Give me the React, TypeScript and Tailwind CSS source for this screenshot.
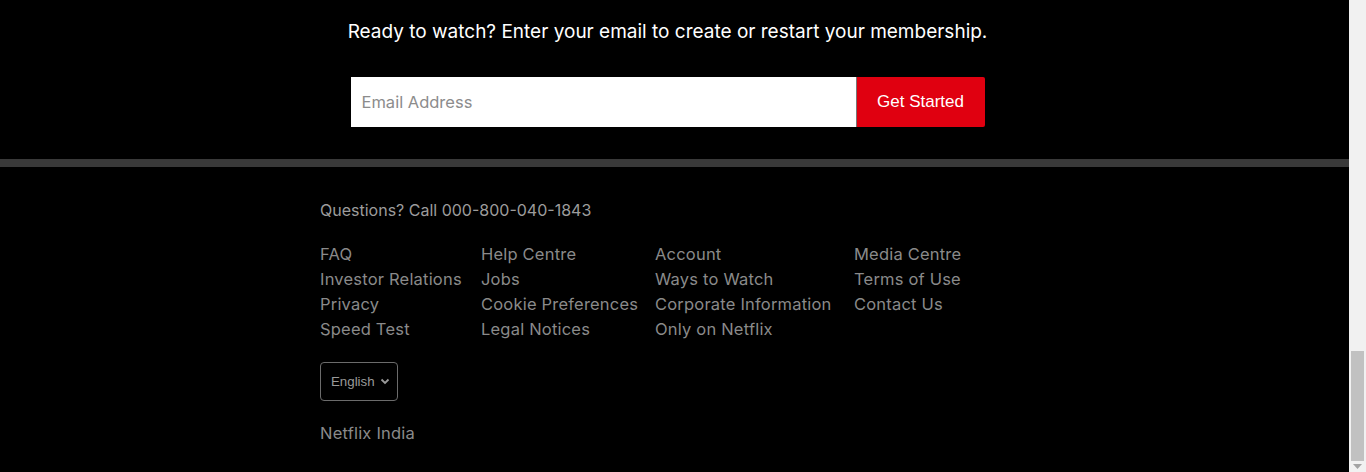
const links = [
    ["FAQ", "Help Centre", "Account", "Media Centre"],
    ["Investor Relations", "Jobs", "Ways to Watch", "Terms of Use"],
    ["Privacy", "Cookie Preferences", "Corporate Information", "Contact Us"],
    ["Speed Test", "Legal Notices", "Only on Netflix", ""],
]

function Scrollbar() {
    return (
        <div className="w-[17px] shrink-0 bg-[#f1f1f1] flex flex-col justify-end items-center">
            <div className="w-[13px] h-[110px] bg-[#c1c1c1]" />
            <div className="h-[11px] flex items-center justify-center">
                <svg width="9" height="5" viewBox="0 0 9 5">
                    <path d="M0 0 L9 0 L4.5 5 Z" fill="#a3a3a3" />
                </svg>
            </div>
        </div>
    )
}

export default function App() {
    return (
        <div className="flex h-[472px] overflow-hidden bg-black font-[Inter,sans-serif]">
            <div className="flex-1 flex flex-col">
                {/* email signup */}
                <section className="flex flex-col items-center pt-[18px] pr-[14px]">
                    <h3 className="text-white text-[19px] leading-[28px] font-normal">
                        Ready to watch? Enter your email to create or restart your membership.
                    </h3>
                    <form className="flex mt-[31px] mb-[32px]">
                        <input
                            type="email"
                            placeholder="Email Address"
                            className="w-[506px] h-[50px] bg-white px-[11px] text-[16.5px] text-black placeholder:text-[#8c8c8c] outline-none border-r border-[#777]"
                        />
                        <button
                            type="button"
                            className="w-[128px] h-[50px] bg-[#e00010] text-white text-[17px] font-['Liberation_Sans',Arial,sans-serif] rounded-r-[2px]"
                        >
                            Get Started
                        </button>
                    </form>
                </section>

                <div className="h-2 bg-[#393939]" />

                {/* footer */}
                <footer className="pl-[320px] pt-[31px] text-[16px]">
                    <p className="text-[#9c9c9c] leading-[24px]">Questions? Call 000-800-040-1843</p>
                    <div className="grid grid-cols-[161px_174px_199px_auto] mt-[20px] text-[#8a8a8a] text-[16.5px] tracking-[0.2px] leading-[25px]">
                        {links.flat().map((l, i) => (
                            <a key={i} href="#" className="whitespace-nowrap">{l}</a>
                        ))}
                    </div>
                    <div className="mt-[20px]">
                        <div className="inline-flex items-center gap-[5px] h-[39px] w-[78px] pl-[10px] border border-[#6b6b6b] rounded-[4px] text-[#9a9a9a] text-[13.3px] font-['Liberation_Sans',Arial,sans-serif]">
                            English
                            <svg width="10" height="7" viewBox="0 0 10 7" fill="none">
                                <path d="M1.5 1.5 L5 5 L8.5 1.5" stroke="#9a9a9a" strokeWidth="1.8" />
                            </svg>
                        </div>
                    </div>
                    <p className="mt-[20px] text-[#8a8a8a] text-[16.5px] tracking-[0.2px] leading-[24px]">Netflix India</p>
                </footer>
            </div>
            <Scrollbar />
        </div>
    )
}
